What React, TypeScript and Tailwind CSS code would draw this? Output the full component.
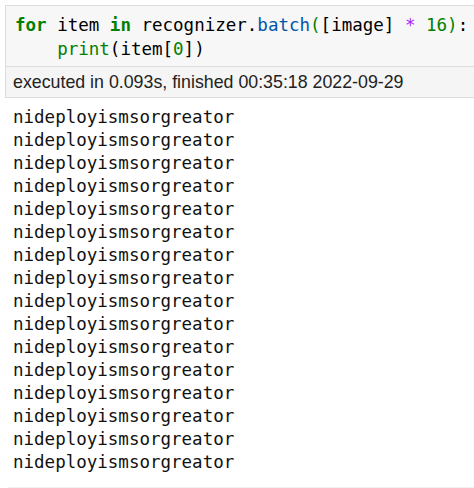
import React from "react";

const mono = { fontFamily: '"DejaVu Sans Mono", monospace' };

export default function App() {
  const lines = Array.from({ length: 16 }, () => "nideployismsorgreator");
  return (
    <div className="w-[474px] h-[488px] bg-white overflow-hidden pl-[5px] pt-[5px] flex flex-col">
      <div className="w-[480px] border border-[#dcdcdc] bg-[#f7f7f7]">
        <div
          className="pl-[9px] pt-[7px] pb-[5px] text-[17.5px] leading-[24px] text-[#000] whitespace-pre"
          style={mono}
        >
          <div>
            <span className="text-[#008000] font-bold">for</span> item{" "}
            <span className="text-[#008000] font-bold">in</span> recognizer.
            <span className="text-[#0055aa]">batch</span>
            <span className="text-[#008000]">(</span>[image]{" "}
            <span className="text-[#aa22ff]">*</span>{" "}
            <span className="text-[#008000]">16</span>
            <span className="text-[#008000]">)</span>:
          </div>
          <div>
            {"    "}
            <span className="text-[#008000]">print</span>(item[
            <span className="text-[#008000]">0</span>])
          </div>
        </div>
        <div
          className="border-t border-[#dcdcdc] bg-[#f5f5f5] h-[31px] pl-[7px] flex items-center text-[17.8px] text-[#222]"
          style={{ fontFamily: '"Liberation Sans", Arial, sans-serif' }}
        >
          executed in 0.093s, finished 00:35:18 2022-09-29
        </div>
      </div>
      <div
        className="flex-1 pl-[8px] pt-[8px] text-[17.5px] leading-[23px] text-[#111]"
        style={mono}
      >
        {lines.map((l, i) => (
          <div key={i}>{l}</div>
        ))}
      </div>
      <div className="ml-[3px] h-[1px] bg-[#f0f0f0]" />
    </div>
  );
}
